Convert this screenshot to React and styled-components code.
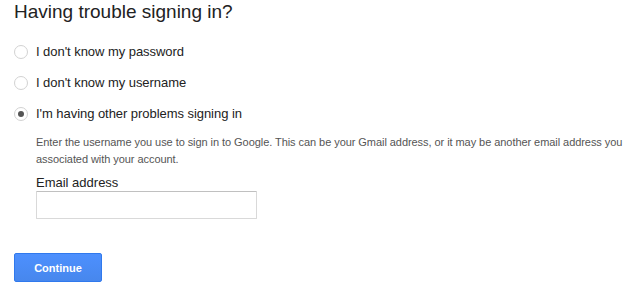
import React from "react";
import styled, { createGlobalStyle } from "styled-components";

const GlobalStyle = createGlobalStyle`
  body {
    margin: 0;
    background: #fff;
    font-family: Arial, "Liberation Sans", sans-serif;
    color: #222;
  }
`;

const Page = styled.div`
  padding: 0 6px 0 14px;
`;

const Title = styled.h1`
  margin: 0;
  padding-top: 1px;
  font-size: 19px;
  font-weight: normal;
  line-height: 22px;
  color: #222;
`;

const Options = styled.div`
  margin-top: 20px;
  display: flex;
  flex-direction: column;
  gap: 14px;
`;

const Option = styled.label`
  display: flex;
  align-items: center;
  gap: 8px;
  font-size: 13px;
  line-height: 17px;
  letter-spacing: -0.05px;
  color: #222;
`;

const Radio = styled.span`
  width: 12px;
  height: 12px;
  margin-left: 0;
  border: 1px solid #d2d2d2;
  border-radius: 50%;
  background: #fff;
  display: flex;
  align-items: center;
  justify-content: center;
  flex-shrink: 0;

  &::after {
    content: "";
    width: 6px;
    height: 6px;
    border-radius: 50%;
    background: ${(p) => (p.$checked ? "#555" : "transparent")};
  }
`;

const Details = styled.div`
  padding-left: 22px;
  margin-top: 12px;
`;

const Help = styled.p`
  margin: 0;
  font-size: 11px;
  line-height: 17px;
  letter-spacing: -0.06px;
  color: #555;
`;

const FieldLabel = styled.div`
  margin-top: 7px;
  font-size: 13px;
  line-height: 16px;
  color: #222;
`;

const Input = styled.input`
  display: block;
  box-sizing: border-box;
  width: 221px;
  height: 28px;
  margin: 0;
  border: 1px solid #d9d9d9;
  border-top-color: #c0c0c0;
  border-radius: 1px;
  padding: 0 8px;
  font-size: 13px;
  font-family: inherit;
`;

const Button = styled.button`
  margin-top: 34px;
  width: 88px;
  height: 29px;
  border: 1px solid #3079ed;
  border-radius: 2px;
  background: linear-gradient(#4d90fe, #4787ed);
  color: #fff;
  font-family: inherit;
  font-size: 11px;
  font-weight: bold;
  padding: 0;
`;

const App = () => {
  return (
    <Page>
      <GlobalStyle />
      <Title>Having trouble signing in?</Title>
      <Options>
        <Option>
          <Radio />I don't know my password
        </Option>
        <Option>
          <Radio />I don't know my username
        </Option>
        <Option>
          <Radio $checked />I'm having other problems signing in
        </Option>
      </Options>
      <Details>
        <Help>
          Enter the username you use to sign in to Google. This can be your Gmail
          address, or it may be another email address you associated with your
          account.
        </Help>
        <FieldLabel>Email address</FieldLabel>
        <Input type="text" />
      </Details>
      <Button>Continue</Button>
    </Page>
  );
};

export default App;
